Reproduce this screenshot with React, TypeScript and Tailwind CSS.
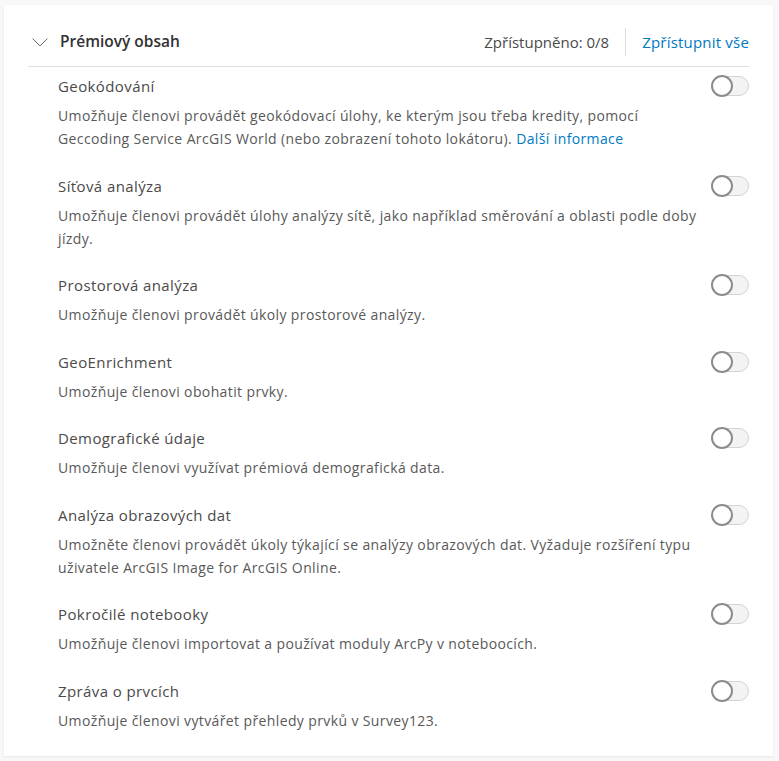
import React from "react";

const items: { title: string; desc: React.ReactNode }[] = [
  {
    title: "Geokódování",
    desc: (
      <>
        Umožňuje členovi provádět geokódovací úlohy, ke kterým jsou třeba kredity, pomocí Geccoding Service ArcGIS World
        (nebo zobrazení tohoto lokátoru).{" "}
        <a className="text-[#0079c1]" href="#">
          Další informace
        </a>
      </>
    ),
  },
  {
    title: "Síťová analýza",
    desc: "Umožňuje členovi provádět úlohy analýzy sítě, jako například směrování a oblasti podle doby jízdy.",
  },
  { title: "Prostorová analýza", desc: "Umožňuje členovi provádět úkoly prostorové analýzy." },
  { title: "GeoEnrichment", desc: "Umožňuje členovi obohatit prvky." },
  { title: "Demografické údaje", desc: "Umožňuje členovi využívat prémiová demografická data." },
  {
    title: "Analýza obrazových dat",
    desc: "Umožněte členovi provádět úkoly týkající se analýzy obrazových dat. Vyžaduje rozšíření typu uživatele ArcGIS Image for ArcGIS Online.",
  },
  { title: "Pokročilé notebooky", desc: "Umožňuje členovi importovat a používat moduly ArcPy v noteboocích." },
  { title: "Zpráva o prvcích", desc: "Umožňuje členovi vytvářet přehledy prvků v Survey123." },
];

function Toggle() {
  return (
    <div className="relative w-[38px] h-[22px] shrink-0">
      <div className="absolute left-[2px] right-0 top-[1px] bottom-[1px] rounded-full bg-[#f3f3f3] border border-[#d4d4d4]" />
      <div className="absolute left-0 top-0 w-[22px] h-[22px] rounded-full border-2 border-[#8c8c8c] bg-white" />
    </div>
  );
}

export default function App() {
  return (
    <div
      className="min-h-screen bg-[#f8f8f8] pt-[5px] pl-[4px]"
      style={{ fontFamily: '"Open Sans", "Noto Sans", sans-serif' }}
    >
      <div className="w-[769px] bg-white shadow-[0_1px_2px_rgba(0,0,0,0.08)] pt-[13px] px-[24px] pb-[24px]">
        <div className="h-[49px] border-b border-[#dfdfdf] flex items-center">
          <svg width="16" height="9" viewBox="0 0 16 9" className="ml-[4px] mr-[12px]" fill="none">
            <path d="M0.5 0.5 L8 8 L15.5 0.5" stroke="#6e6e6e" strokeWidth="1" />
          </svg>
          <div className="text-[15.5px] font-semibold text-[#323232]">Prémiový obsah</div>
          <div className="ml-auto flex items-center">
            <span className="text-[15px] text-[#4a4a4a]">Zpřístupněno: 0/8</span>
            <div className="w-px h-[28px] bg-[#dcdcdc] mx-[16px]" />
            <a href="#" className="text-[15px] tracking-[0.2px] text-[#0079c1]">
              Zpřístupnit vše
            </a>
          </div>
        </div>
        <div className="pl-[30px] pt-[9px] flex flex-col gap-[25.5px]">
          {items.map((it) => (
            <div key={it.title} className="flex">
              <div className="flex-1 pr-[2px]">
                <div className="h-[20px] leading-[20px] text-[15px] tracking-[0.4px] text-[#4a4a4a]">{it.title}</div>
                <div className="mt-[8px] text-[14px] leading-[23px] tracking-[0.38px] text-[#595959]">{it.desc}</div>
              </div>
              <div className="-mt-[1px]">
                <Toggle />
              </div>
            </div>
          ))}
        </div>
      </div>
    </div>
  );
}
